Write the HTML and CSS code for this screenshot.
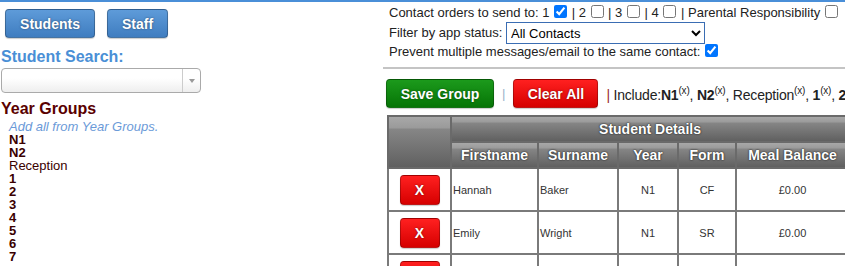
FILE: index.html
```html
<!DOCTYPE html>
<html lang="en">
<head>
    <meta charset="UTF-8">
    <title>Messaging - Select Recipients</title>
    <link rel="stylesheet" href="styles.css">
</head>
<body>
    <div class="page">
        <div class="left">
            <div class="tabs">
                <button class="btn btn-blue">Students</button>
                <button class="btn btn-blue staff">Staff</button>
            </div>

            <div class="search-label">Student Search:</div>
            <div class="combo">
                <span class="combo-text"></span>
                <span class="combo-arrow"><b></b></span>
            </div>

            <h2 class="group-title">Year Groups</h2>
            <div class="add-all">Add all from Year Groups.</div>
            <ul class="groups">
                <li class="b">N1</li>
                <li class="b">N2</li>
                <li>Reception</li>
                <li class="b">1</li>
                <li class="b">2</li>
                <li class="b">3</li>
                <li class="b">4</li>
                <li class="b">5</li>
                <li class="b">6</li>
                <li class="b">7</li>
            </ul>
        </div>

        <div class="right">
            <div class="opts">
                <div class="opt-row">
                    Contact orders to send to: 1 <input type="checkbox" checked> | 2 <input type="checkbox"> | 3 <input type="checkbox"> | 4 <input type="checkbox"> | Parental Responsibility <input type="checkbox">
                </div>
                <div class="opt-row filter">
                    Filter by app status:
                    <select class="status">
                        <option>All Contacts</option>
                        <option>App Users</option>
                        <option>Non App Users</option>
                    </select>
                </div>
                <div class="opt-row last">
                    Prevent multiple messages/email to the same contact: <input type="checkbox" checked>
                </div>
            </div>

            <div class="actions">
                <button class="btn btn-green">Save Group</button>
                <span class="pipe">|</span>
                <button class="btn btn-red">Clear All</button>
                <span class="include"><span class="pipe-red">|</span> Include:<b>N1</b><sup>(x)</sup>, <b>N2</b><sup>(x)</sup>, Reception<sup>(x)</sup>, <b>1</b><sup>(x)</sup>, <b>2</b><sup>(x)</sup></span>
            </div>

            <table class="students">
                <colgroup>
                    <col class="c-act">
                    <col class="c-first">
                    <col class="c-sur">
                    <col class="c-year">
                    <col class="c-form">
                    <col class="c-meal">
                </colgroup>
                <thead>
                    <tr>
                        <th rowspan="2"></th>
                        <th colspan="5">Student Details</th>
                    </tr>
                    <tr>
                        <th>Firstname</th>
                        <th>Surname</th>
                        <th>Year</th>
                        <th>Form</th>
                        <th>Meal Balance</th>
                    </tr>
                </thead>
                <tbody>
                    <tr>
                        <td class="act"><button class="btn btn-red x">X</button></td>
                        <td>Hannah</td>
                        <td>Baker</td>
                        <td class="mid">N1</td>
                        <td class="mid">CF</td>
                        <td class="mid">£0.00</td>
                    </tr>
                    <tr>
                        <td class="act"><button class="btn btn-red x">X</button></td>
                        <td>Emily</td>
                        <td>Wright</td>
                        <td class="mid">N1</td>
                        <td class="mid">SR</td>
                        <td class="mid">£0.00</td>
                    </tr>
                    <tr>
                        <td class="act"><button class="btn btn-red x">X</button></td>
                        <td></td>
                        <td></td>
                        <td class="mid"></td>
                        <td class="mid"></td>
                        <td class="mid"></td>
                    </tr>
                </tbody>
            </table>
        </div>
    </div>
</body>
</html>
```

FILE: styles.css
```css
html, body {
    overflow: hidden;
}
body {
    margin: 0;
    border-top: 2px solid #4a8fd8;
    font-family: "Liberation Sans", Arial, sans-serif;
    font-size: 13px;
    color: #222;
    background: #fff;
}
.page {
    display: flex;
    align-items: flex-start;
}

/* left column */
.left {
    width: 368px;
    flex-shrink: 0;
    padding-left: 1px;
}
.tabs {
    display: flex;
    gap: 12px;
    padding: 7px 0 0 4px;
}
.btn {
    flex-shrink: 0;
    padding: 0;
    font-family: "Liberation Sans", Arial, sans-serif;
    font-weight: bold;
    font-size: 14px;
    color: #fff;
    border: 1px solid rgba(0, 0, 0, 0.25);
    border-radius: 4px;
    cursor: pointer;
    text-shadow: 0 0 2px rgba(0, 0, 0, 0.5);
    box-shadow: 0 1px 1px rgba(0, 0, 0, 0.2);
}
.btn-blue {
    width: 90px;
    height: 29px;
    background: linear-gradient(#5e9bd9, #3f7dc0);
}
.btn-blue.staff {
    width: 61px;
}
.search-label {
    margin-top: 9px;
    color: #4a8fd6;
    font-weight: bold;
    font-size: 16px;
    line-height: 20px;
}
.combo {
    display: flex;
    width: 198px;
    height: 23px;
    margin-top: 1px;
    border: 1px solid #aaa;
    border-radius: 4px;
    background: linear-gradient(#fff 40%, #eee);
}
.combo-text {
    flex: 1;
}
.combo-arrow {
    width: 17px;
    border-left: 1px solid #ccc;
    display: flex;
    align-items: center;
    justify-content: center;
}
.combo-arrow b {
    width: 0;
    height: 0;
    border-left: 3px solid transparent;
    border-right: 3px solid transparent;
    border-top: 4px solid #999;
}
.group-title {
    margin: 6px 0 0 0;
    font-size: 16px;
    line-height: 19px;
    color: #5a0000;
}
.add-all {
    margin-top: 1px;
    padding-left: 8px;
    font-style: italic;
    color: #6b9ad8;
    line-height: 16px;
}
.groups {
    list-style: none;
    margin: -2px 0 0 0;
    padding: 0 0 0 8px;
    line-height: 13px;
    color: #3a0000;
}
.groups .b {
    font-weight: bold;
}

/* right column */
.right {
    flex: 1;
    min-width: 0;
    overflow: hidden;
    padding-left: 14px;
}
.opts {
    border-bottom: 2px solid #c4c4c4;
    padding: 2px 0 8px 6px;
    margin-right: -20px;
}
.opt-row {
    line-height: 18px;
    white-space: nowrap;
}
.opt-row.filter {
    height: 22px;
    line-height: 22px;
}
.opt-row.last {
    line-height: 14px;
}
.opt-row input[type="checkbox"] {
    width: 13px;
    height: 13px;
    margin: 0 1px;
    vertical-align: -1px;
}
.status {
    width: 199px;
    height: 22px;
    margin: 0;
    vertical-align: top;
    font-family: "Liberation Sans", Arial, sans-serif;
    font-size: 13px;
    border: 1px solid #3a6db3;
    background: #fff;
}
.actions {
    display: flex;
    align-items: center;
    gap: 8px;
    margin-top: 10px;
    padding-left: 3px;
    white-space: nowrap;
}
.btn-green {
    width: 108px;
    height: 29px;
    background: linear-gradient(#1c9a1c, #067506);
}
.btn-red {
    background: linear-gradient(#ff2020, #d60000);
}
.actions .btn-red {
    width: 85px;
    height: 29px;
}
.pipe {
    color: #9bb2c9;
}
.include {
    font-size: 14px;
    letter-spacing: -0.2px;
    color: #222;
}
.pipe-red {
    color: #9a2a2a;
}
.include sup {
    font-size: 10px;
}

/* table */
.students {
    margin: 7px 0 0 4px;
    border-collapse: collapse;
    border: 2px solid #777;
    table-layout: fixed;
    width: 461px;
}
.c-act { width: 63px; }
.c-first { width: 87px; }
.c-sur { width: 80px; }
.c-year { width: 60px; }
.c-form { width: 58px; }
.c-meal { width: 113px; }
.students th {
    height: 24px;
    padding: 0;
    border: 2px solid #6a6a6a;
    font-size: 14px;
    color: #fff;
    text-shadow: 0 0 2px #222, 0 0 1px #333;
    background: linear-gradient(#a8a8a8 0, #9a9a9a 22%, #868686 24%, #606060 100%);
}
.students td {
    height: 41px;
    padding: 0 1px;
    border: 2px solid #7a7a7a;
    font-size: 11px;
    color: #333;
}
.students td.mid {
    text-align: center;
}
.students td.act {
    text-align: center;
}
.btn.x {
    width: 40px;
    height: 30px;
    font-size: 14px;
}
```
